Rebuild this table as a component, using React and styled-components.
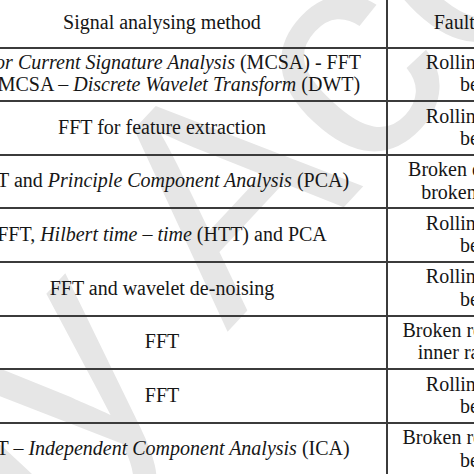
import React from "react";
import styled, { createGlobalStyle } from "styled-components";

const GlobalStyle = createGlobalStyle`
  html, body {
    margin: 0;
    padding: 0;
    background: #ffffff;
  }
  body {
    overflow: hidden;
  }
`;

const Page = styled.div`
  position: relative;
  width: 474px;
  height: 474px;
  overflow: hidden;
  background: #ffffff;
  font-family: "Liberation Serif", "Times New Roman", serif;
  color: #161616;
`;

const Watermark = styled.div`
  position: absolute;
  left: ${(p) => p.$x}px;
  top: ${(p) => p.$y}px;
  transform: translate(-50%, -50%) rotate(-47deg);
  font-family: "Liberation Sans", Arial, sans-serif;
  font-size: 300px;
  line-height: 1;
  white-space: nowrap;
  color: #e6e6e6;
  pointer-events: none;
  z-index: 0;
`;

const Table = styled.div`
  position: relative;
  z-index: 1;
  display: flex;
  flex-direction: column;
  margin-left: -62px;
  width: 654px;
`;

const Row = styled.div`
  display: grid;
  grid-template-columns: 450px 204px;
  box-sizing: border-box;
  height: ${(p) => (p.$head ? "48.7px" : "53.6px")};
  border-bottom: 2px solid #3b3b3b;
`;

const Cell = styled.div`
  display: flex;
  flex-direction: column;
  align-items: center;
  justify-content: center;
  box-sizing: border-box;
  padding-bottom: ${(p) => (p.$head ? "3px" : "2px")};
  border-right: ${(p) => (p.$first ? "2px solid #3b3b3b" : "none")};
  font-size: 20px;
  line-height: 22.5px;
  white-space: nowrap;
`;

const Line = styled.span`
  display: block;
`;

const rows = [
  {
    method: [
      <>
        <i>Motor Current Signature Analysis</i> (MCSA) - FFT
      </>,
      <>
        and MCSA – <i>Discrete Wavelet Transform</i> (DWT)
      </>,
    ],
    fault: ["Rolling element", "bearing"],
  },
  { method: ["FFT for feature extraction"], fault: ["Rolling element", "bearing"] },
  {
    method: [
      <>
        FFT and <i>Principle Component Analysis</i> (PCA)
      </>,
    ],
    fault: ["Broken end ring and", "broken rotor bars"],
  },
  {
    method: [
      <>
        FFT, <i>Hilbert time – time</i> (HTT) and PCA
      </>,
    ],
    fault: ["Rolling element", "bearing"],
  },
  { method: ["FFT and wavelet de-noising"], fault: ["Rolling element", "bearing"] },
  { method: ["FFT"], fault: ["Broken rotor bars and", "inner race bearing"] },
  { method: ["FFT"], fault: ["Rolling element", "bearing"] },
  {
    method: [
      <>
        FFT – <i>Independent Component Analysis</i> (ICA)
      </>,
    ],
    fault: ["Broken rotor bars and", "bearing"],
  },
];

export default function App() {
  return (
    <Page>
      <GlobalStyle />
      <Watermark $x={225} $y={182}>Early Access</Watermark>
      <Table>
        <Row $head>
          <Cell $head $first>
            <Line>Signal analysing method</Line>
          </Cell>
          <Cell $head>
            <Line>Fault detected</Line>
          </Cell>
        </Row>
        {rows.map((r, i) => (
          <Row key={i}>
            <Cell $first>
              {r.method.map((m, j) => (
                <Line key={j}>{m}</Line>
              ))}
            </Cell>
            <Cell>
              {r.fault.map((f, j) => (
                <Line key={j}>{f}</Line>
              ))}
            </Cell>
          </Row>
        ))}
      </Table>
    </Page>
  );
}
